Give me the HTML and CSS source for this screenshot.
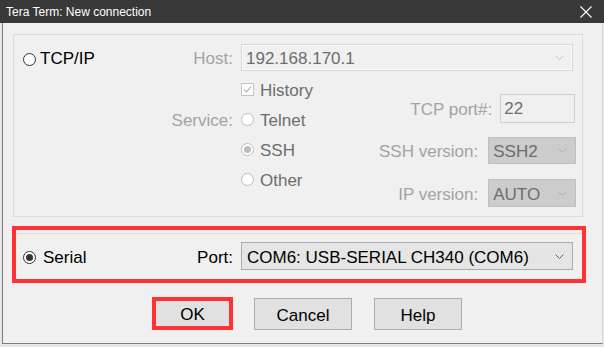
FILE: index.html
```html
<!DOCTYPE html>
<html>
<head>
<meta charset="utf-8">
<link rel="stylesheet" href="styles.css">
</head>
<body>
<div class="win">
  <div class="titlebar">
    <span class="title">Tera Term: New connection</span>
    <svg class="close" width="12" height="12" viewBox="0 0 12 12"><path d="M0.5 0.5 L11.5 11.5 M11.5 0.5 L0.5 11.5" stroke="#fff" stroke-width="1.1" fill="none"/></svg>
  </div>
  <div class="body">
    <div class="group">
      <div class="host-row">
        <div class="radio-item main"><span class="radio low"></span><span class="rtext t">TCP/IP</span></div>
        <span class="lbl host-lbl t">Host:</span>
        <div class="combo combo-host"><span class="val t">192.168.170.1</span><svg class="chev" width="9" height="5" viewBox="0 0 9 5"><path d="M0.5 0.5 L4.5 4.5 L8.5 0.5" stroke="#c4c4c4" fill="none"/></svg></div>
      </div>
      <div class="opts">
        <div class="left-grid">
          <span></span>
          <div class="opt"><span class="check"><svg width="11" height="11" viewBox="0 0 11 11"><path d="M2 5.5 L4.5 8 L9 2.5" stroke="#bcbcbc" stroke-width="1.3" fill="none"/></svg></span><span class="t">History</span></div>
          <span class="lbl t">Service:</span>
          <div class="opt"><span class="radio dis"></span><span class="t">Telnet</span></div>
          <span></span>
          <div class="opt"><span class="radio dis on"></span><span class="t">SSH</span></div>
          <span></span>
          <div class="opt"><span class="radio dis"></span><span class="t">Other</span></div>
        </div>
        <div class="right-col">
          <div class="rrow port-row"><span class="lbl t">TCP port#:</span><div class="field">22</div></div>
          <div class="rrow ssh-row"><span class="lbl t">SSH version:</span><div class="combo combo-sm"><span class="val t">SSH2</span><svg class="chev" width="9" height="5" viewBox="0 0 9 5"><path d="M0.5 0.5 L4.5 4.5 L8.5 0.5" stroke="#b0b0b0" fill="none"/></svg></div></div>
          <div class="rrow ip-row"><span class="lbl t">IP version:</span><div class="combo combo-sm"><span class="val t">AUTO</span><svg class="chev" width="9" height="5" viewBox="0 0 9 5"><path d="M0.5 0.5 L4.5 4.5 L8.5 0.5" stroke="#b0b0b0" fill="none"/></svg></div></div>
        </div>
      </div>
    </div>
    <div class="serial-hl">
      <div class="serial-line"></div>
      <div class="serial-row">
        <div class="radio-item serial"><span class="radio on low"></span><span class="rtext t">Serial</span></div>
        <span class="port-lbl t">Port:</span>
        <div class="combo combo-port"><span class="val t">COM6: USB-SERIAL CH340 (COM6)</span><svg class="chev" width="9" height="5" viewBox="0 0 9 5"><path d="M0.5 0.5 L4.5 4.5 L8.5 0.5" stroke="#606060" fill="none"/></svg></div>
      </div>
    </div>
    <div class="buttons">
      <div class="btn ok"><span class="t">OK</span></div>
      <div class="btn cancel"><span class="t">Cancel</span></div>
      <div class="btn help"><span class="t">Help</span></div>
    </div>
  </div>
</div>
</body>
</html>
```
FILE: styles.css
```css
html, body {
  margin: 0;
  padding: 0;
  background: #e6e6e6;
}
body {
  width: 604px;
  height: 347px;
  overflow: hidden;
  font-family: "Liberation Sans", Arial, sans-serif;
  font-size: 17px;
}
.win {
  width: 604px;
}
.t {
  padding-top: 3px;
  white-space: nowrap;
}
.titlebar {
  height: 23px;
  background: #383838;
  display: flex;
  align-items: center;
  justify-content: space-between;
  padding: 0 12px 0 6px;
  box-sizing: border-box;
}
.title {
  color: #fff;
  font-size: 12px;
  line-height: 23px;
  padding-top: 1px;
}
.close {
  display: block;
}
.body {
  margin-left: 2px;
  width: 601px;
  height: 321px;
  box-sizing: border-box;
  background: #f0f0f0;
  border-left: 1px solid #7c7c7c;
  border-right: 1px solid #d8d8d8;
  border-bottom: 1px solid #7c7c7c;
  padding: 11px 0 0 10px;
}
.group {
  width: 570px;
  box-sizing: border-box;
  border: 1px solid #dcdcdc;
  padding: 9px 0 9px 0;
}
.host-row {
  display: flex;
  align-items: center;
  height: 27px;
}
.radio-item {
  display: flex;
  align-items: center;
  color: #000;
}
.radio-item.main {
  width: 136px;
  box-sizing: border-box;
  padding-left: 9px;
}
.radio-item .rtext {
  margin-left: 4px;
}
.radio {
  width: 13px;
  height: 13px;
  box-sizing: border-box;
  border-radius: 50%;
  border: 1px solid #333;
  background: #fff;
  display: flex;
  align-items: center;
  justify-content: center;
  flex: none;
}
.radio.low {
  margin-top: 3px;
}
.radio.on::after {
  content: "";
  width: 7px;
  height: 7px;
  border-radius: 50%;
  background: #333;
}
.radio.dis {
  border-color: #bcbcbc;
}
.radio.dis.on::after {
  background: #bcbcbc;
}
.lbl {
  color: #a3a3a3;
  text-align: right;
}
.host-lbl {
  width: 83px;
  margin-right: 8px;
}
.combo {
  display: flex;
  align-items: center;
  justify-content: space-between;
  box-sizing: border-box;
  padding: 0 8px 0 4px;
  color: #6d6d6d;
}
.combo-host {
  width: 332px;
  height: 27px;
  border: 1px solid #d6d6d6;
  background: #f0f0f0;
  box-shadow: inset 0 0 0 1px #fbfbfb;
}
.opts {
  display: flex;
  align-items: flex-start;
  margin-top: 3px;
}
.left-grid {
  display: grid;
  grid-template-columns: 219px 138px;
  grid-auto-rows: 30px;
  column-gap: 8px;
  align-items: center;
}
.opt {
  display: flex;
  align-items: center;
  color: #6d6d6d;
}
.opt > span:last-child {
  margin-left: 6px;
}
.check {
  width: 13px;
  height: 13px;
  box-sizing: border-box;
  border: 1px solid #c4c4c4;
  background: #fff;
  display: flex;
  align-items: center;
  justify-content: center;
}
.check svg {
  display: block;
}
.right-col {
  flex: 1;
  display: flex;
  flex-direction: column;
  align-items: flex-end;
  padding: 20px 8px 0 0;
}
.rrow {
  display: flex;
  align-items: center;
}
.port-row {
  height: 29px;
  margin-bottom: 14px;
}
.port-row .lbl {
  margin-right: 8px;
}
.field {
  width: 75px;
  height: 29px;
  box-sizing: border-box;
  border: 1px solid #cfcfcf;
  background: #f0f0f0;
  color: #6d6d6d;
  padding: 4px 0 0 3px;
  margin-right: 1px;
}
.ssh-row {
  height: 27px;
  margin-bottom: 15px;
}
.ip-row {
  height: 28px;
}
.ssh-row .lbl, .ip-row .lbl {
  margin-right: 10px;
}
.combo-sm {
  width: 88px;
  height: 100%;
  border: 1px solid #bfbfbf;
  background: #cccccc;
}
.serial-hl {
  margin: 9px 0 0 -1px;
  width: 574px;
  height: 57px;
  box-sizing: border-box;
  border: 4px solid #ff3333;
}
.serial-line {
  margin-top: 3px;
  border-top: 1px solid #dcdcdc;
}
.serial-row {
  display: flex;
  align-items: center;
  height: 28px;
  margin-top: 8px;
  padding-right: 9px;
}
.radio-item.serial {
  flex: 1;
  padding-left: 7px;
}
.radio-item.serial .rtext {
  margin-left: 7px;
}
.port-lbl {
  color: #000;
  margin-right: 8px;
}
.combo-port {
  width: 332px;
  height: 28px;
  border: 1px solid #adadad;
  background: #e5e5e5;
  color: #000;
  padding-left: 5px;
}
.chev {
  display: block;
  flex: none;
}
.buttons {
  display: flex;
  align-items: flex-start;
  margin-top: 14px;
}
.btn {
  display: flex;
  align-items: center;
  justify-content: center;
  box-sizing: border-box;
  background: #e1e1e1;
  border: 1px solid #adadad;
  color: #000;
  height: 32px;
}
.btn.ok {
  margin-left: 139px;
  width: 81px;
  height: 33px;
  border: 4px solid #ff3333;
}
.btn.cancel {
  margin: 1px 0 0 21px;
  width: 98px;
}
.btn.help {
  margin: 1px 0 0 22px;
  width: 88px;
}
```
